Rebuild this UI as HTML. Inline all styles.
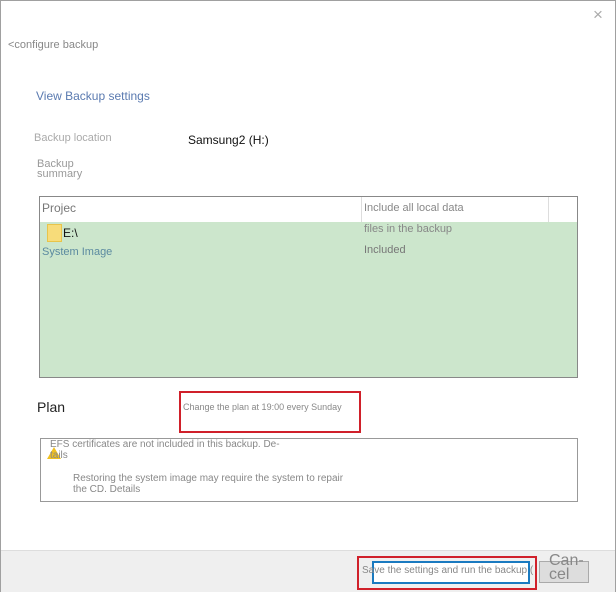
<!DOCTYPE html>
<html><head><style>
body{margin:0;width:616px;height:592px;position:relative;font-family:"Liberation Sans",sans-serif;background:#fff;overflow:hidden}
.a{position:absolute;white-space:nowrap}
</style></head><body>
<div class="a" style="left:0;top:0;width:614px;height:590px;border:1px solid #a0a0a0"></div>
<div class="a" style="left:593px;top:5px;font-size:17px;color:#aaa">×</div>
<div class="a" style="left:8px;top:39px;font-size:11px;color:#888">&lt;configure backup</div>
<div class="a" style="left:36px;top:89px;font-size:12px;color:#5a7ab0">View Backup settings</div>
<div class="a" style="left:34px;top:132px;font-size:11px;color:#aaa">Backup location</div>
<div class="a" style="left:188px;top:133px;font-size:12px;color:#111">Samsung2 (H:)</div>
<div class="a" style="left:37px;top:159px;font-size:11px;color:#999;line-height:10px">Backup<br>summary</div>
<div class="a" style="left:39px;top:196px;width:537px;height:180px;border:1px solid #888;background:#cce6cc"></div>
<div class="a" style="left:40px;top:197px;width:537px;height:25px;background:#fff"></div>
<div class="a" style="left:361px;top:197px;width:1px;height:25px;background:#ddd"></div>
<div class="a" style="left:548px;top:197px;width:1px;height:25px;background:#ddd"></div>
<div class="a" style="left:42px;top:201px;font-size:12px;color:#777">Projec</div>
<div class="a" style="left:364px;top:202px;font-size:11px;color:#888">Include all local data</div>
<div class="a" style="left:47px;top:224px;width:13px;height:16px;background:#f7dc7a;border:1px solid #e8c44a"></div>
<div class="a" style="left:63px;top:226px;font-size:12px;color:#111">E:\</div>
<div class="a" style="left:364px;top:223px;font-size:11px;color:#888">files in the backup</div>
<div class="a" style="left:42px;top:246px;font-size:11px;color:#5b8aa0">System Image</div>
<div class="a" style="left:364px;top:244px;font-size:11px;color:#777">Included</div>
<div class="a" style="left:37px;top:399px;font-size:14px;color:#222">Plan</div>
<div class="a" style="left:179px;top:391px;width:178px;height:38px;border:2px solid #d0202a"></div>
<div class="a" style="left:183px;top:402px;font-size:9px;color:#888">Change the plan at 19:00 every Sunday</div>
<div class="a" style="left:40px;top:438px;width:536px;height:62px;border:1px solid #999"></div>
<div class="a" style="left:47px;top:447px;width:0;height:0;border-left:7px solid transparent;border-right:7px solid transparent;border-bottom:12px solid #f0c020"></div>
<div class="a" style="left:50px;top:439px;font-size:10px;color:#888;line-height:11px">EFS certificates are not included in this backup. De-<br>tails</div>
<div class="a" style="left:73px;top:473px;font-size:10px;color:#888;line-height:11px">Restoring the system image may require the system to repair<br>the CD. Details</div>
<div class="a" style="left:1px;top:550px;width:614px;height:41px;background:#efefef;border-top:1px solid #ddd"></div>
<div class="a" style="left:357px;top:556px;width:176px;height:30px;border:2px solid #d0202a"></div>
<div class="a" style="left:372px;top:561px;width:154px;height:19px;border:2px solid #1a7ac0;background:#fff"></div>
<div class="a" style="left:362px;top:565px;font-size:10px;color:#888">Save the settings and run the backup (</div>
<div class="a" style="left:539px;top:561px;width:48px;height:20px;border:1px solid #aaa;background:#ddd"></div>
<div class="a" style="left:549px;top:554px;font-size:16px;color:#888;line-height:14px">Can-<br>cel</div>
</body></html>
